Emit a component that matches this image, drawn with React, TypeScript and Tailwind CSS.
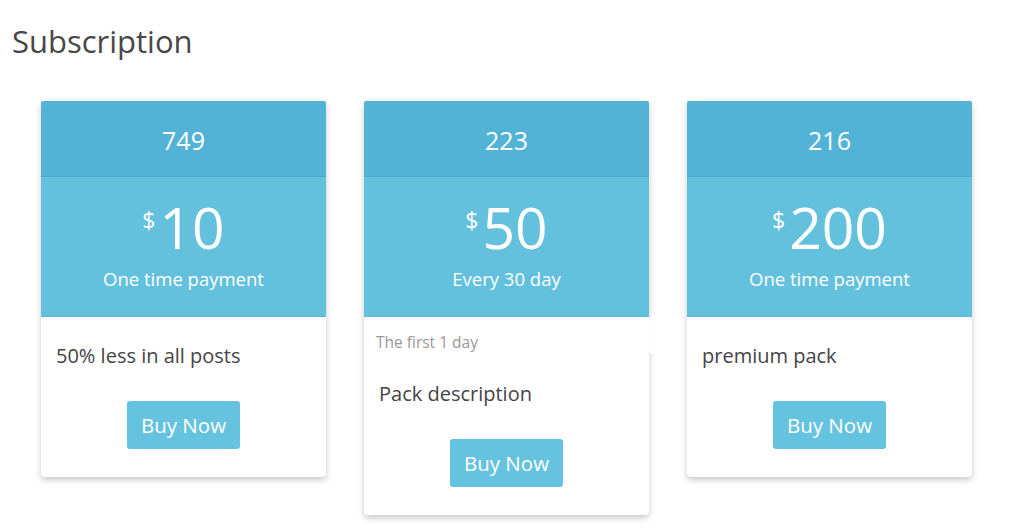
import React from "react";

type Plan = {
  count: string;
  price: string;
  period: string;
  desc: string;
  note?: string;
};

const plans: Plan[] = [
  { count: "749", price: "10", period: "One time payment", desc: "50% less in all posts" },
  { count: "223", price: "50", period: "Every 30 day", desc: "Pack description", note: "The first 1 day" },
  { count: "216", price: "200", period: "One time payment", desc: "premium pack" },
];

function Card({ p }: { p: Plan }) {
  return (
    <div className="w-[285px] bg-white rounded-[4px] shadow-[0_3px_6px_rgba(0,0,0,0.22)] flex flex-col">
      <div className="h-[76px] bg-[#52b3d6] rounded-t-[2px] border-b border-[#4aa8cc] flex items-center justify-center text-white text-[25px] leading-none pt-[3px]">
        {p.count}
      </div>
      <div className="h-[140px] bg-[#63c1de] border-b border-[#5ab9d9] flex flex-col items-center pt-[22px]">
        <div className="flex items-start text-white leading-none">
          <span className="text-[23px] leading-none mt-[10px] mr-[4px]">$</span>
          <span className="text-[57px] leading-none">{p.price}</span>
        </div>
        <div className="text-white text-[18.5px] leading-[27px] mt-[9px]">{p.period}</div>
      </div>
      {p.note && (
        <div className="relative z-10 h-[36px] w-[calc(100%+5px)] bg-white pt-[15px] pl-[12px] text-[15.5px] leading-[20px] text-[#999999]">
          {p.note}
        </div>
      )}
      <div className={`flex flex-col px-[15px] pb-[28px] ${p.note ? "pt-[27px]" : "pt-[25px]"}`}>
        <div className="text-[20px] leading-[27px] text-[#444444]">{p.desc}</div>
        <div className="flex justify-center mt-[32px]">
          <button className="h-[48px] px-[14px] bg-[#65c3df] text-white text-[20.5px] leading-none rounded-[3px]">
            Buy Now
          </button>
        </div>
      </div>
    </div>
  );
}

export default function App() {
  return (
    <div
      className="w-[1024px] h-[530px] bg-white overflow-hidden"
      style={{ fontFamily: '"Open Sans", sans-serif' }}
    >
      <h1 className="pl-[12px] pt-[21px] text-[31px] leading-[40px] text-[#474747]">Subscription</h1>
      <div className="flex items-start gap-[38px] pl-[41px] mt-[40px]">
        {plans.map((p) => (
          <Card key={p.count} p={p} />
        ))}
      </div>
    </div>
  );
}
